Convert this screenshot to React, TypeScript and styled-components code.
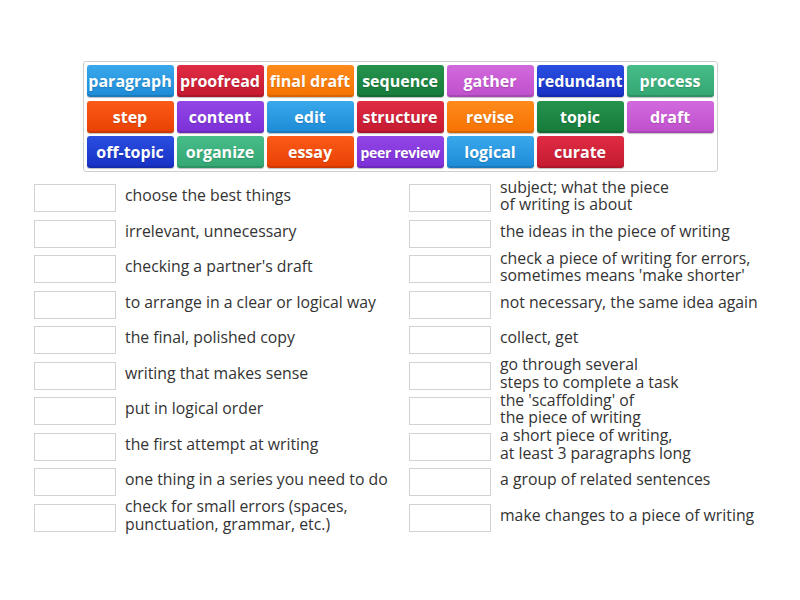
import React from 'react';
import styled, { createGlobalStyle } from 'styled-components';

const GlobalStyle = createGlobalStyle`
  html, body {
    margin: 0;
    padding: 0;
    background: #ffffff;
  }
  body {
    font-family: "Open Sans", "Noto Sans", sans-serif;
    color: #333333;
  }
`;

// paleta de colores de las fichas
const palette: Record<string, [string, string]> = {
  sky: ['#3aa8ec', '#1d8ad6'],
  red: ['#df2c44', '#c41a30'],
  orange: ['#ff8a1c', '#f57200'],
  green: ['#25934d', '#177a3b'],
  orchid: ['#d26adc', '#bf4fcc'],
  blue: ['#2a4fe0', '#1730c4'],
  mint: ['#48bd89', '#33a672'],
  vermilion: ['#fb5a18', '#e94004'],
  purple: ['#9346e6', '#7b2fd6'],
};

interface TileData {
  label: string;
  color: keyof typeof palette;
  small?: boolean;
}

const tiles: TileData[] = [
  { label: 'paragraph', color: 'sky' },
  { label: 'proofread', color: 'red' },
  { label: 'final draft', color: 'orange' },
  { label: 'sequence', color: 'green' },
  { label: 'gather', color: 'orchid' },
  { label: 'redundant', color: 'blue' },
  { label: 'process', color: 'mint' },
  { label: 'step', color: 'vermilion' },
  { label: 'content', color: 'purple' },
  { label: 'edit', color: 'sky' },
  { label: 'structure', color: 'red' },
  { label: 'revise', color: 'orange' },
  { label: 'topic', color: 'green' },
  { label: 'draft', color: 'orchid' },
  { label: 'off-topic', color: 'blue' },
  { label: 'organize', color: 'mint' },
  { label: 'essay', color: 'vermilion' },
  { label: 'peer review', color: 'purple', small: true },
  { label: 'logical', color: 'sky' },
  { label: 'curate', color: 'red' },
];

const leftItems: string[] = [
  'choose the best things',
  'irrelevant, unnecessary',
  "checking a partner's draft",
  'to arrange in a clear or logical way',
  'the final, polished copy',
  'writing that makes sense',
  'put in logical order',
  'the first attempt at writing',
  'one thing in a series you need to do',
  'check for small errors (spaces,\npunctuation, grammar, etc.)',
];

const rightItems: string[] = [
  'subject; what the piece\nof writing is about',
  'the ideas in the piece of writing',
  "check a piece of writing for errors,\nsometimes means 'make shorter'",
  'not necessary, the same idea again',
  'collect, get',
  'go through several\nsteps to complete a task',
  "the 'scaffolding' of\nthe piece of writing",
  'a short piece of writing,\nat least 3 paragraphs long',
  'a group of related sentences',
  'make changes to a piece of writing',
];

const Page = styled.div`
  width: 800px;
  height: 600px;
  box-sizing: border-box;
  padding-top: 61px;
  display: flex;
  flex-direction: column;
  align-items: center;
`;

const TileBank = styled.div`
  width: 635px;
  box-sizing: border-box;
  padding: 3px 3px;
  border: 1px solid #cfcfcf;
  border-radius: 3px;
  display: grid;
  grid-template-columns: repeat(7, 87px);
  grid-auto-rows: 32px;
  column-gap: 3px;
  row-gap: 3.5px;
`;

const Tile = styled.div<{ $top: string; $bottom: string; $small?: boolean }>`
  display: flex;
  align-items: center;
  justify-content: center;
  border-radius: 3px;
  background: linear-gradient(${({ $top }) => $top}, ${({ $bottom }) => $bottom});
  box-shadow: inset 0 -2px 0 rgba(0, 0, 0, 0.12), 0 1px 1px rgba(0, 0, 0, 0.25);
  color: #ffffff;
  font-family: "Open Sans", sans-serif;
  font-weight: 700;
  font-size: ${({ $small }) => ($small ? '14px' : '16px')};
  letter-spacing: ${({ $small }) => ($small ? '-0.3px' : '0')};
  white-space: nowrap;
  text-shadow: 0 1px 1px rgba(0, 0, 0, 0.15);
`;

const Targets = styled.div`
  margin-top: 12px;
  width: 742px;
  display: grid;
  grid-template-columns: 366px 366px;
  column-gap: 9px;
  align-self: flex-start;
  margin-left: 34px;
`;

const Column = styled.div`
  display: flex;
  flex-direction: column;
  row-gap: 7.5px;
`;

const Row = styled.div`
  display: flex;
  align-items: center;
  column-gap: 9px;
  height: 28px;
`;

const Slot = styled.div`
  flex: 0 0 auto;
  width: 82px;
  height: 28px;
  box-sizing: border-box;
  border: 1px solid #d2d2d2;
  background: #ffffff;
`;

const Clue = styled.div`
  font-size: 15.8px;
  line-height: 17.5px;
  padding-bottom: 4px;
  color: #333333;
  white-space: pre-line;
`;

const ClueList: React.FC<{ items: string[] }> = ({ items }) => (
  <Column>
    {items.map((text) => (
      <Row key={text}>
        <Slot />
        <Clue>{text}</Clue>
      </Row>
    ))}
  </Column>
);

const App: React.FC = () => {
  return (
    <>
      <GlobalStyle />
      <Page>
        <TileBank>
          {tiles.map((t) => (
            <Tile
              key={t.label}
              $top={palette[t.color][0]}
              $bottom={palette[t.color][1]}
              $small={t.small}
            >
              {t.label}
            </Tile>
          ))}
        </TileBank>
        <Targets>
          <ClueList items={leftItems} />
          <ClueList items={rightItems} />
        </Targets>
      </Page>
    </>
  );
};

export default App;
